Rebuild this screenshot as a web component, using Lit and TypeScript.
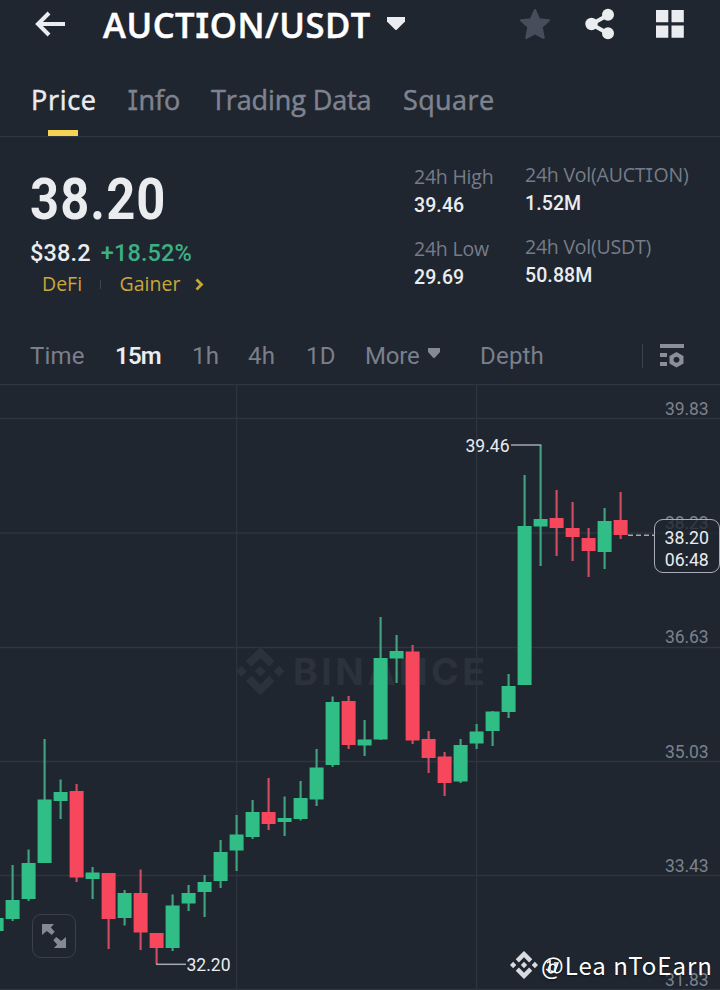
import { LitElement, html, css, svg } from "lit";
import { customElement, state } from "lit/decorators.js";

type Candle = [color: "g" | "r", high: number, top: number, bottom: number, low: number];

const FIRST_X = -3.4;
const STEP = 16;
const TOP = 384;

const candles: Candle[] = [
  ["g", 918, 918, 931, 931],
  ["g", 865, 900, 919, 921],
  ["g", 849.5, 863, 899, 901],
  ["g", 739, 799.5, 863, 863],
  ["g", 779.5, 792, 801, 819],
  ["r", 784, 791, 877.5, 882],
  ["g", 867, 872.5, 879, 899],
  ["r", 873, 873, 919, 949],
  ["g", 890, 893, 918, 925.5],
  ["r", 869.5, 893, 932.5, 950],
  ["r", 933, 933, 948, 964],
  ["g", 894.5, 905.5, 948, 951],
  ["g", 885, 893, 903.5, 911],
  ["g", 875, 882, 892, 917],
  ["g", 840, 852, 881, 888],
  ["g", 815, 834.5, 850.5, 871],
  ["g", 800, 812, 837, 839],
  ["r", 778, 812, 824, 830],
  ["g", 796.5, 818, 822, 836],
  ["g", 781, 798, 819, 820.5],
  ["g", 749, 767.5, 799.5, 806],
  ["g", 696.5, 702, 765, 767],
  ["r", 696, 701, 745, 749],
  ["g", 720, 739.5, 745.5, 756],
  ["g", 617, 658, 739.5, 740],
  ["g", 635, 651, 658.5, 683],
  ["r", 645, 651.5, 740.5, 744],
  ["r", 731, 739, 758, 773],
  ["r", 752, 756.5, 783, 796],
  ["g", 739, 745, 781.5, 783],
  ["g", 724, 731.5, 743.5, 749],
  ["g", 711, 711.5, 731, 746],
  ["g", 674, 686, 712, 718],
  ["g", 475, 526, 685, 685],
  ["g", 445, 519, 526.5, 566],
  ["r", 490, 518, 528, 556],
  ["r", 502, 528, 537, 561],
  ["r", 528, 538, 551, 577],
  ["g", 508, 521, 552, 569],
  ["r", 492, 520, 535, 539],
];

const logo = svg`<path d="M12 0l7.1 7.1-2.7 2.7L12 5.4 7.6 9.8 4.9 7.1zM2.7 9.3L5.4 12l-2.7 2.7L0 12zM12 9.3l2.7 2.7-2.7 2.7L9.3 12zM21.3 9.3L24 12l-2.7 2.7-2.7-2.7zM12 24l-7.1-7.1 2.7-2.7 4.4 4.4 4.4-4.4 2.7 2.7z"/>`;

@customElement("price-chart")
class PriceChart extends LitElement {
  static styles = css`
    :host { display: block; position: relative; height: 606px; overflow: hidden; }
    .plot { display: block; }
    .grid { stroke: #2e353e; stroke-width: 1.3; }
    .g { fill: #31bd86; }
    .r { fill: #f6475d; }
    .wg { fill: #3ca37b; }
    .wr { fill: #cf4960; }
    .axis { fill: #7c818c; font: 17.5px Roboto, sans-serif; }
    .mark { fill: #eaecef; font: 17.5px Roboto, sans-serif; }
    .leader { stroke: #a4a8b2; stroke-width: 1.5; fill: none; }
    .dash { stroke: #a4a8b2; stroke-width: 1.5; stroke-dasharray: 5 3; }
    .ghost { fill: #2c323c; }
    .brand { fill: #2c323c; font: 700 37.5px Inter, sans-serif; }
    .tag {
      position: absolute; left: 654px; top: 135px; width: 65.5px; height: 54px;
      box-sizing: border-box; border: 1.5px solid #a9adb8; border-radius: 9px;
      background: #1f262fc4; color: #eaecef; font: 17.7px/22px Roboto, sans-serif;
      display: flex; flex-direction: column; align-items: center; padding-top: 7px;
    }
    .expand {
      position: absolute; left: 32px; top: 530px; width: 44px; height: 44px;
      box-sizing: border-box; border: 1.5px solid #3b414c; border-radius: 9px;
      background: #1f262f; display: grid; place-items: center;
    }
    .credit {
      position: absolute; left: 510px; top: 566px; display: flex; align-items: center;
      color: #fff; font: 24px/30px "Noto Sans CJK SC", "Noto Sans", sans-serif; white-space: pre;
      text-shadow: 0 1px 2px #0008;
    }
    .credit .mark-icon { fill: #d9dbe0; margin-right: 3px; }
    .handle { letter-spacing: 1px; }
    .scribble { position: absolute; left: 32px; top: 5px; fill: none; stroke: #fff; }
  `;

  render() {
    const rows = [384.5, 418.5, 533, 647.5, 761.5, 875.5, 989.5];
    const labels: [string, number][] = [
      ["39.83", 415], ["38.23", 529], ["36.63", 643], ["35.03", 758], ["33.43", 872], ["31.83", 986],
    ];
    return html`
      <svg class="plot" width="720" height="606" viewBox="0 ${TOP} 720 606">
        ${rows.map((y) => svg`<line class="grid" x1="0" x2="720" y1=${y} y2=${y} />`)}
        ${[236.7, 476.6].map((x) => svg`<line class="grid" x1=${x} x2=${x} y1="384" y2="990" />`)}
        <g class="ghost" transform="translate(236 647) scale(2.02)">${logo}</g>
        <text class="brand" x="293" y="685" textLength="192">BINANCE</text>
        ${candles.map(([c, high, top, bottom, low], i) => {
          const x = FIRST_X + i * STEP;
          return svg`<rect class="w${c}" x=${x - 1.1} y=${high} width="2.2" height=${low - high} />
            <rect class=${c} x=${x - 7} y=${top} width="14" height=${bottom - top} />`;
        })}
        <path class="leader" d="M511 445H541.3" />
        <path class="leader" d="M156 964.3H186" />
        <path class="dash" d="M628 535.3H654" />
        <text class="mark" x="465.500" y="452" textLength="44">39.46</text>
        <text class="mark" x="186.500" y="971" textLength="44">32.20</text>
        ${labels.map(([t, y]) => svg`<text class="axis" x="665" y=${y} textLength="43.5">${t}</text>`)}
      </svg>
      <div class="tag"><span>38.20</span><span>06:48</span></div>
      <div class="expand">
        <svg width="26" height="26" viewBox="0 0 26 26" fill="#858993">
          <path d="M1 1h12L9.800 4.400l3.900 4.400-2.900 3.200-5-4L1 12zM25 25H13l3.200-3.400-3.900-4.400 2.900-3.200 5 4L25 14z" />
        </svg>
      </div>
      <div class="credit">
        <svg class="mark-icon" width="28" height="28" viewBox="0 0 24 24">${logo}</svg>
        <span class="handle">@Lea nToEarn</span>
        <svg class="scribble" width="22" height="22" viewBox="0 0 22 22" stroke-width="1.500">
          <path d="M8 5v11M5 8l3-2M4 14l4 3M12 8h4l-3 8M9 16l4 1" />
        </svg>
      </div>
    `;
  }
}

@customElement("app-root")
class AppRoot extends LitElement {
  @state() tab = "Price";
  @state() interval = "15m";

  static styles = css`
    :host {
      display: flex; flex-direction: column; width: 720px; height: 990px; overflow: hidden;
      background: #1f262f; color: #eaecef; font-family: "Open Sans", "Noto Sans", sans-serif;
    }
    .cap {
      display: inline-block; font-family: "DejaVu Sans Mono", monospace; font-size: 0.98em;
      line-height: 1; width: 0.43em; text-indent: -0.085em; transform: scaleX(0.76); letter-spacing: 0;
    }
    .bar { height: 50px; display: flex; align-items: center; padding: 0 36px 2px 34px; box-sizing: border-box; white-space: nowrap; }
    .bar svg { flex: none; }
    .pair { font-size: 34.5px; line-height: 50px; font-weight: 600; color: #fff; margin-left: 37px; padding-top: 2px; letter-spacing: 0.6px; width: 267px; -webkit-text-stroke: 0.5px #fff; }
    .caret { margin: 0 0 1px 16px; }
    .tools { margin-left: auto; display: flex; align-items: center; }
    .share { margin: 0 41px 0 34px; }
    .tabs { height: 87px; box-sizing: border-box; display: flex; padding: 32px 0 0 31px; gap: 31px; border-bottom: 1px solid #303740; font-size: 27px; line-height: 36px; font-weight: 500; color: #7f838f; }
    .tab { position: relative; white-space: nowrap; -webkit-text-stroke: 0.5px currentColor; }
    .tab.on { color: #eaecef; }
    .tab.on::after { content: ""; position: absolute; left: 17px; bottom: 0; width: 30px; height: 6px; background: #f3d255; }
    .t0 { width: 65px; letter-spacing: 0.7px; } .t1 { width: 53px; } .t2 { width: 161px; letter-spacing: -0.1px; } .t3 { width: 91px; letter-spacing: 0.4px; }
    .summary { height: 189px; box-sizing: border-box; display: grid; grid-template-columns: 384px 111px 1fr; padding: 24px 0 0 30px; }
    .last { font: 700 57px/76px Roboto, sans-serif; letter-spacing: 1.2px; transform: translateY(1px) scaleX(0.89); transform-origin: 0 0; }
    .change { display: flex; gap: 10px; font: 500 23.5px/32px Roboto, sans-serif; letter-spacing: 0.15px; }
    .up { color: #3cb083; }
    .tags { display: flex; align-items: center; padding-left: 12px; font-size: 19.5px; line-height: 30px; color: #c9a739; }
    .sep { width: 1px; height: 9px; background: #3f4550; margin: 0 18.5px 0 18px; }
    .tags svg { margin-left: 14.5px; }
    .stats { display: flex; flex-direction: column; gap: 14px; margin-top: -1px; }
    .stats.first { margin-top: 1.4px; }
    .stat { white-space: nowrap; }
    .label { font-size: 19.5px; line-height: 29px; color: #777c88; letter-spacing: -0.22px; }
    .value { font: 500 19.5px/29px Roboto, sans-serif; letter-spacing: 0.1px; }
    .intervals { height: 58px; display: flex; align-items: center; padding: 1px 0 0 30px; box-sizing: border-box; font-size: 24px; color: #7a7f8b; }
    .iv { flex: none; white-space: nowrap; font-family: Roboto, sans-serif; letter-spacing: 0.2px; }
    .iv.on { color: #eaecef; font-weight: 600; letter-spacing: -0.8px; }
    .i0 { width: 85px; } .i1 { width: 77px; } .i2 { width: 56px; } .i3 { width: 58px; } .i4 { width: 59px; } .i5 { width: 62px; letter-spacing: -0.2px; } .i6 { width: 65px; }
    .drop { margin: 0 39px 3px 0; }
    .rule { width: 1px; height: 24px; background: #3c424d; margin: 0 17px 0 97px; }
  `;

  /** Sets every capital I in the slab-serif form. */
  private slab(text: string) {
    return text.split("I").map((part, i) => (i ? html`<span class="cap">I</span>${part}` : part));
  }

  render() {
    const tabs = ["Price", "Info", "Trading Data", "Square"];
    const intervals = ["Time", "15m", "1h", "4h", "1D", "More"];
    const stat = (label: string, value: string) =>
      html`<div class="stat"><div class="label">${this.slab(label)}</div><div class="value">${value}</div></div>`;
    return html`
      <header class="bar">
        <svg width="32" height="26" viewBox="0 0 32 26" fill="none" stroke="#eaecef" stroke-width="4"><path d="M31 13H4M15 2L4 13l11 11" /></svg>
        <div class="pair">${this.slab("AUCTION/USDT")}</div>
        <svg class="caret" width="20" height="14" viewBox="0 0 20 14" fill="#eaecef"><path d="M1 0h18v4.500L10.500 13h-1L1 4.500z" /></svg>
        <div class="tools">
          <svg width="32" height="32" viewBox="0 0 32 32" fill="#474d5a" stroke="#474d5a" stroke-width="2" stroke-linejoin="round"><path d="M16 2l4.200 9.200L30 12.200l-7.300 6.800L24.800 30 16 25.400 7.200 30l2.100-11L2 12.200l9.800-1z" /></svg>
          <svg class="share" width="30" height="32" viewBox="0 0 30 32" fill="#eaecef"><path d="M23 7L6.500 16.200 23 25.500" fill="none" stroke="#eaecef" stroke-width="4" /><circle cx="23" cy="6.700" r="6" /><circle cx="6.500" cy="16" r="6.200" /><circle cx="23" cy="25.300" r="6" /></svg>
          <svg width="28" height="28" viewBox="0 0 28 28" fill="#eaecef"><path d="M0 0h12.300v12.300H0zM15.500 0h12.300v12.300H15.500zM0 15.500h12.300v12.300H0zM15.500 15.500h12.300v12.300H15.500z" /></svg>
        </div>
      </header>
      <nav class="tabs">
        ${tabs.map((t, i) => html`<div class="tab t${i} ${t === this.tab ? "on" : ""}">${this.slab(t)}</div>`)}
      </nav>
      <section class="summary">
        <div>
          <div class="last">38.20</div>
          <div class="change"><span>$38.2</span><span class="up">+18.52%</span></div>
          <div class="tags">
            <span>DeFi</span><i class="sep"></i><span>Gainer</span>
            <svg width="9" height="13" viewBox="0 0 9 13" fill="none" stroke="#c9a739" stroke-width="2.800"><path d="M1.500 1.500l5 5-5 5" /></svg>
          </div>
        </div>
        <div class="stats first">${stat("24h High", "39.46")}${stat("24h Low", "29.69")}</div>
        <div class="stats">${stat("24h Vol(AUCTION)", "1.52M")}${stat("24h Vol(USDT)", "50.88M")}</div>
      </section>
      <nav class="intervals">
        ${intervals.map((t, i) => html`<div class="iv i${i} ${t === this.interval ? "on" : ""}">${t}</div>`)}
        <svg class="drop" width="14" height="12" viewBox="0 0 14 12" fill="#858994"><path d="M1 0h12v4L7.500 10h-1L1 4z" /></svg>
        <div class="iv i6">Depth</div>
        <div class="rule"></div>
        <svg width="25" height="25" viewBox="0 0 25 25" fill="#8b8f99"><path d="M0 1h24v4H0zM0 10h7v4H0zM0 19h7v4H0z" /><path fill-rule="evenodd" d="M16.500 9l7 4v7.500l-7 4-7-4V13zM16.500 13.800a3 3 0 1 0 .01 0z" /></svg>
      </nav>
      <price-chart></price-chart>
    `;
  }
}
